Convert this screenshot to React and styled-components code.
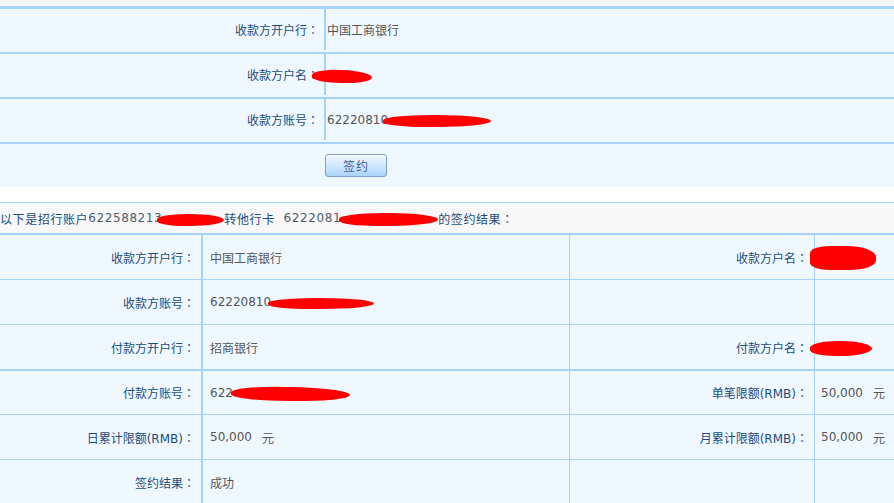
import React from "react";
import styled, { createGlobalStyle } from "styled-components";

const GlobalStyle = createGlobalStyle`
  html, body {
    margin: 0;
    padding: 0;
    background: #ffffff;
  }
  body {
    font-family: "DejaVu Sans", "Noto Sans CJK SC", sans-serif;
    font-size: 12px;
  }
`;

const line = "#a7d3f8";

const Page = styled.div`
  width: 894px;
  overflow: hidden;
`;

const TopBand = styled.div`
  height: 6px;
  background: #f5f6f7;
`;

const SignForm = styled.div`
  border-top: 3px solid ${line};
  background: #f0f8ff;
`;

const FormRow = styled.div`
  display: grid;
  grid-template-columns: 326px 1fr;
  height: ${(p) => p.$h || 45}px;
  box-sizing: border-box;
  padding-bottom: ${(p) => (p.$last ? 0 : 2)}px;
  border-bottom: ${(p) => (p.$last ? "none" : `2px solid ${line}`)};
`;

const Label = styled.div`
  display: flex;
  align-items: center;
  justify-content: flex-end;
  padding-right: ${(p) => p.$pad || 5}px;
  color: #1b4c7c;
  white-space: nowrap;
  border-right: ${(p) => (p.$noLine ? "none" : `${p.$line || 1}px solid ${line}`)};
`;

/* full-width colon, centred in its box like the original bitmap font */
const Colon = styled.span`
  font-family: "Noto Sans CJK TC", sans-serif;
`;

const Value = styled.div`
  display: flex;
  align-items: center;
  padding-left: ${(p) => p.$pad ?? 3}px;
  color: #555;
  white-space: nowrap;
  border-right: ${(p) => (p.$edge ? `1px solid ${line}` : "none")};
`;

const SignButton = styled.button`
  width: 62px;
  height: 23px;
  margin-left: -1px;
  border: 1px solid #7f9fc4;
  border-radius: 3px;
  background: linear-gradient(#eef7ff, #cfe6ff 55%, #a9d2fb);
  color: #3d5f8e;
  font-family: "Noto Sans CJK SC", sans-serif;
  font-size: 12px;
  letter-spacing: 1px;
  padding: 0;
  box-shadow: inset 0 1px 0 #ffffff;
`;

const Gap = styled.div`
  height: 15px;
  background: #ffffff;
`;

const ResultHeader = styled.div`
  height: 33px;
  box-sizing: border-box;
  border-top: 1px solid ${line};
  border-bottom: 2px solid ${line};
  background: #f8f8f8;
  display: flex;
  align-items: center;
  color: #1b4c7c;
  white-space: nowrap;
  letter-spacing: 0.6px;
`;

const Digits = styled.span`
  color: #4f5d6c;
`;

const ResultTable = styled.div`
  background: #f0f8ff;
`;

const ResultRow = styled.div`
  display: grid;
  grid-template-columns: 203px 367px 245px 1fr;
  height: ${(p) => p.$h || 45}px;
  box-sizing: border-box;
  border-bottom: ${(p) => p.$border ?? 1}px solid ${line};
`;

const Redact = styled.span`
  display: inline-block;
  width: ${(p) => p.$w}px;
  height: ${(p) => p.$h}px;
  margin-left: ${(p) => p.$ml || 0}px;
  margin-right: ${(p) => p.$mr || 0}px;
  margin-top: ${(p) => p.$mt || 0}px;
  background: #ff0000;
  border-radius: ${(p) => p.$r || "45% 50% 50% 40%"};
  transform: rotate(${(p) => p.$rot || 0}deg);
  vertical-align: middle;
  flex-shrink: 0;
  position: relative;
  z-index: 1;
`;

const Unit = styled.span`
  margin-left: 10px;
`;

function Money({ amount }) {
  return (
    <>
      <span>{amount}</span>
      <Unit>元</Unit>
    </>
  );
}

function Field({ children }) {
  return (
    <>
      {children}
      <Colon>：</Colon>
    </>
  );
}

export default function App() {
  return (
    <Page>
      <GlobalStyle />
      <TopBand />
      <SignForm>
        <FormRow>
          <Label $line={2}>
            <Field>收款方开户行</Field>
          </Label>
          <Value $pad={1}>中国工商银行</Value>
        </FormRow>
        <FormRow>
          <Label $line={2}>
            <Field>收款方户名</Field>
            <Redact $w={60} $h={13} $ml={-7} $mr={-53} $mt={3} $rot={2} />
          </Label>
          <Value />
        </FormRow>
        <FormRow>
          <Label $line={2}>
            <Field>收款方账号</Field>
          </Label>
          <Value $pad={1}>
            62220810
            <Redact $w={108} $h={12} $ml={-5} $mt={3} />
          </Value>
        </FormRow>
        <FormRow $last $h={43}>
          <Label $noLine />
          <Value $pad={0}>
            <SignButton>签约</SignButton>
          </Value>
        </FormRow>
      </SignForm>
      <Gap />
      <ResultHeader>
        以下是招行账户<Digits>622588213</Digits>
        <Redact $w={67} $h={12} $ml={-5} $mt={3} />
        转他行卡&nbsp;&nbsp;<Digits>6222081</Digits>
        <Redact $w={99} $h={13} $ml={-2} $mt={2} />
        的签约结果<Colon>：</Colon>
      </ResultHeader>
      <ResultTable>
        <ResultRow>
          <Label $line={2} $pad={6}>
            <Field>收款方开户行</Field>
          </Label>
          <Value $pad={7} $edge>中国工商银行</Value>
          <Label $pad={6}>
            <Field>收款方户名</Field>
            <Redact $w={66} $h={24} $ml={2} $mr={-68} $mt={2} $r="30% 45% 40% 30%" />
          </Label>
          <Value />
        </ResultRow>
        <ResultRow>
          <Label $line={2} $pad={6}>
            <Field>收款方账号</Field>
          </Label>
          <Value $pad={7} $edge>
            62220810
            <Redact $w={106} $h={11} $ml={-3} $mt={2} />
          </Value>
          <Label $pad={6} />
          <Value />
        </ResultRow>
        <ResultRow $border={2} $h={46}>
          <Label $line={2} $pad={6}>
            <Field>付款方开户行</Field>
          </Label>
          <Value $pad={7} $edge>招商银行</Value>
          <Label $pad={6}>
            <Field>付款方户名</Field>
            <Redact $w={62} $h={15} $ml={2} $mr={-64} $mt={2} />
          </Label>
          <Value />
        </ResultRow>
        <ResultRow $h={44}>
          <Label $line={2} $pad={6}>
            <Field>付款方账号</Field>
          </Label>
          <Value $pad={7} $edge>
            622
            <Redact $w={119} $h={14} $ml={-2} $mt={2} $rot={1} />
          </Value>
          <Label $pad={6}>
            <Field>单笔限额(RMB)</Field>
          </Label>
          <Value $pad={6}>
            <Money amount="50,000" />
          </Value>
        </ResultRow>
        <ResultRow>
          <Label $line={2} $pad={6}>
            <Field>日累计限额(RMB)</Field>
          </Label>
          <Value $pad={7} $edge>
            <Money amount="50,000" />
          </Value>
          <Label $pad={6}>
            <Field>月累计限额(RMB)</Field>
          </Label>
          <Value $pad={6}>
            <Money amount="50,000" />
          </Value>
        </ResultRow>
        <ResultRow $border={0} $h={45}>
          <Label $line={2} $pad={6}>
            <Field>签约结果</Field>
          </Label>
          <Value $pad={7} $edge>成功</Value>
          <Label $pad={6} />
          <Value />
        </ResultRow>
      </ResultTable>
    </Page>
  );
}
